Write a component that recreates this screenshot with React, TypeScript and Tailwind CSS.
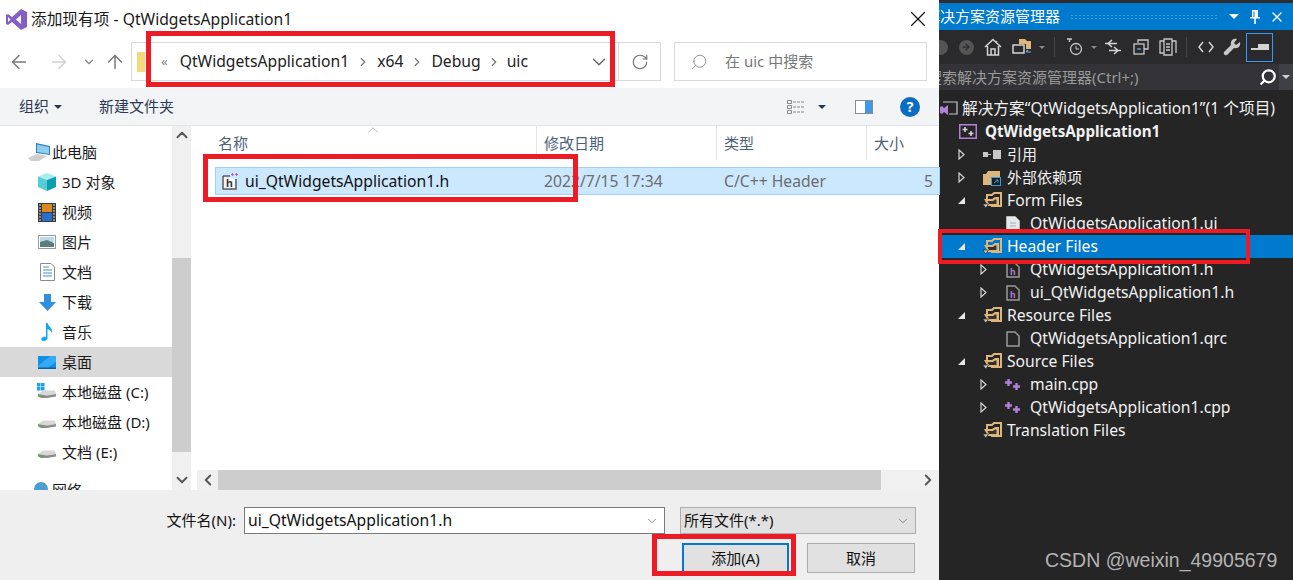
import { ArrowLeft, ArrowRight, ArrowUp, ChevronDown, ChevronLeft, ChevronRight, ChevronUp, RotateCw, Search, X } from 'lucide-react';

const FONT = '"Noto Sans", "Noto Sans CJK SC", sans-serif';

const DriveIcon = ({ win }: { win?: boolean }) => (
  <svg width="20" height="18" viewBox="0 0 20 18">
    {win && (
      <g fill="#1aa3e8">
        <rect x="0" y="0" width="3.5" height="3.5" />
        <rect x="4" y="0" width="3.5" height="3.5" />
        <rect x="0" y="4" width="3.5" height="3.5" />
        <rect x="4" y="4" width="3.5" height="3.5" />
      </g>
    )}
    <path d="M1 11 L6 7.5 H18 L19 11 L10 12.5 Z" fill="#d8d8d8" />
    <path d="M1 11 L10 12.5 L19 11 V13.5 L10 15 H4 L1 13.5 Z" fill="#8c8c8c" />
    <rect x="3" y="12.5" width="3" height="1" fill="#3fbf4a" />
  </svg>
);

const NavIcon = ({ name }: { name: string }) => {
  switch (name) {
    case 'pc':
      return (
        <svg width="24" height="18" viewBox="0 0 24 18">
          <path d="M8 0 L22 3 V12 L8 10 Z" fill="#2f7fc0" />
          <path d="M9 1.5 L21 4 V11 L9 9 Z" fill="#8fcdf0" />
          <path d="M0 15 L9 11 L19 13 L11 18 H3 Z" fill="#cfcfcf" />
        </svg>
      );
    case 'cube':
      return (
        <svg width="18" height="18" viewBox="0 0 18 18">
          <path d="M9 0 L18 3.5 L9 7 L0 3.5 Z" fill="#a9ecef" />
          <path d="M0 3.5 L9 7 V18 L0 14 Z" fill="#55cdd6" />
          <path d="M18 3.5 L9 7 V18 L18 14 Z" fill="#0d9fb0" />
        </svg>
      );
    case 'video':
      return (
        <svg width="18" height="19" viewBox="0 0 18 19">
          <rect width="18" height="19" fill="#3a3a3a" />
          <rect x="4" y="1" width="10" height="8" fill="#d88a1e" />
          <rect x="4" y="10" width="10" height="8" fill="#2a6fd0" />
          <path d="M1 2h2M1 5h2M1 8h2M1 11h2M1 14h2M1 17h2M15 2h2M15 5h2M15 8h2M15 11h2M15 14h2M15 17h2" stroke="#ddd" />
        </svg>
      );
    case 'image':
      return (
        <svg width="18" height="14" viewBox="0 0 18 14">
          <rect x="0.5" y="0.5" width="17" height="13" fill="#fff" stroke="#9a9a9a" />
          <rect x="2" y="2" width="14" height="5" fill="#bcd8ea" />
          <path d="M2 7 L9 5 L16 8 V12 H2 Z" fill="#5b7f78" />
        </svg>
      );
    case 'doc':
      return (
        <svg width="15" height="18" viewBox="0 0 15 18">
          <path d="M0.5 0.5 H11 L14.5 4 V17.5 H0.5 Z" fill="#fff" stroke="#8c8c8c" />
          <path d="M3 4h6M3 7h9M3 10h9M3 13h9" stroke="#4a8fc7" />
        </svg>
      );
    case 'down':
      return (
        <svg width="17" height="17" viewBox="0 0 17 17">
          <path d="M5 0 H12 V8 H17 L8.5 17 L0 8 H5 Z" fill="#2f8fe0" />
        </svg>
      );
    case 'music':
      return (
        <svg width="12" height="18" viewBox="0 0 12 18">
          <path d="M5 0 H6.5 C7 3 12 5 11 10 C10 7.5 8 6.5 6.5 6 V15 C6.5 17 4.5 18 2.5 18 C0.5 18 0 16.5 0.5 15.5 C1 14 3.5 13.5 5 14 Z" fill="#10a5f0" />
        </svg>
      );
    case 'desktop':
      return (
        <svg width="18" height="13" viewBox="0 0 18 13">
          <rect width="18" height="13" fill="#0f8fe8" />
          <path d="M0 10 L12 0 H18 V6 L8 13 H0 Z" fill="#35a9f5" />
          <rect y="11.5" width="18" height="1.5" fill="#0a5fa8" />
        </svg>
      );
    case 'net':
      return (
        <svg width="20" height="18" viewBox="0 0 20 18">
          <circle cx="11" cy="8" r="7" fill="#4c9fd0" />
          <path d="M0 12 L8 9 V14 Z" fill="#9a9a9a" />
        </svg>
      );
    case 'win':
      return <DriveIcon win />;
    default:
      return <DriveIcon />;
  }
};

const navItems = [
  { icon: 'cube', label: '3D 对象' },
  { icon: 'video', label: '视频' },
  { icon: 'image', label: '图片' },
  { icon: 'doc', label: '文档' },
  { icon: 'down', label: '下载' },
  { icon: 'music', label: '音乐' },
  { icon: 'desktop', label: '桌面', active: true },
  { icon: 'win', label: '本地磁盘 (C:)' },
  { icon: 'drive', label: '本地磁盘 (D:)' },
  { icon: 'drive', label: '文档 (E:)' },
];

const HeaderFileIcon = () => (
  <svg width="17" height="18" viewBox="0 0 17 18">
    <path d="M1 4 V17 H14 V7 M1 4 H8" fill="#f4f4f4" stroke="#5a5a5a" strokeWidth="1.5" />
    <text x="4" y="15" fontSize="11" fontWeight="700" fill="#333" fontFamily="Liberation Sans">h</text>
    <path d="M9 2.5h3M10.5 1v3M13 2.5h3M14.5 1v3" stroke="#b46ac0" strokeWidth="1.2" />
  </svg>
);

const FolderIcon = () => (
  <svg width="19" height="17" viewBox="0 0 19 17">
    <path d="M4 7 V3 H9 L11 1 H18 V14 H8" fill="none" stroke="#dcb67a" strokeWidth="2" />
    <path d="M1 7 H9 L12 5 H16 V14 H5 Z" fill="#dcb67a" />
    <path d="M4.5 9 H10 L12 7.5 H13.5 V12 H6 Z" fill="#3a3226" />
    <path d="M0 12 H5.5 L2.75 16 Z" fill="#c8c8c8" stroke="#252526" strokeWidth="0.6" />
  </svg>
);

const TreeFileIcon = ({ kind }: { kind: string }) => {
  if (kind === 'cpp') {
    return (
      <svg width="16" height="11" viewBox="0 0 16 11">
        <path d="M3.5 0 V7 M0 3.5 H7 M11.5 4 V11 M8 7.5 H15" stroke="#b180d7" strokeWidth="2.4" />
      </svg>
    );
  }
  if (kind === 'h') {
    return (
      <svg width="14" height="16" viewBox="0 0 14 16">
        <path d="M1 1 H9 L13 5 V15 H1 Z" fill="none" stroke="#9a9a9a" strokeWidth="1.5" />
        <text x="4" y="12.5" fontSize="9" fontWeight="700" fill="#b180d7" fontFamily="Liberation Sans">h</text>
      </svg>
    );
  }
  return (
    <svg width="14" height="16" viewBox="0 0 14 16">
      <path d="M1 1 H9 L13 5 V15 H1 Z" fill={kind === 'ui' ? '#e8e8e8' : 'none'} stroke={kind === 'ui' ? '#e8e8e8' : '#9a9a9a'} strokeWidth="1.5" />
      {kind === 'ui' && <path d="M4 7h6M4 10h6" stroke="#8fb4cc" />}
    </svg>
  );
};

const Expander = ({ state }: { state?: 'open' | 'closed' }) => {
  if (state === 'open') {
    return (
      <svg width="9" height="9" viewBox="0 0 9 9">
        <path d="M8 1 V8 H1 Z" fill="#e8e8e8" />
      </svg>
    );
  }
  if (state === 'closed') {
    return (
      <svg width="7" height="11" viewBox="0 0 7 11">
        <path d="M1 1 L6 5.5 L1 10 Z" fill="none" stroke="#d4d4d4" strokeWidth="1.2" />
      </svg>
    );
  }
  return null;
};

type TreeRow = {
  label: string;
  level: 1 | 2;
  expander?: 'open' | 'closed';
  icon: string;
  selected?: boolean;
  cjk?: boolean;
};

const treeRows: TreeRow[] = [
  { label: '引用', level: 1, expander: 'closed', icon: 'ref', cjk: true },
  { label: '外部依赖项', level: 1, expander: 'closed', icon: 'ext', cjk: true },
  { label: 'Form Files', level: 1, expander: 'open', icon: 'folder' },
  { label: 'QtWidgetsApplication1.ui', level: 2, icon: 'ui' },
  { label: 'Header Files', level: 1, expander: 'open', icon: 'folder', selected: true },
  { label: 'QtWidgetsApplication1.h', level: 2, expander: 'closed', icon: 'h' },
  { label: 'ui_QtWidgetsApplication1.h', level: 2, expander: 'closed', icon: 'h' },
  { label: 'Resource Files', level: 1, expander: 'open', icon: 'folder' },
  { label: 'QtWidgetsApplication1.qrc', level: 2, icon: 'file' },
  { label: 'Source Files', level: 1, expander: 'open', icon: 'folder' },
  { label: 'main.cpp', level: 2, expander: 'closed', icon: 'cpp' },
  { label: 'QtWidgetsApplication1.cpp', level: 2, expander: 'closed', icon: 'cpp' },
  { label: 'Translation Files', level: 1, icon: 'folder' },
];

const TreeIcon = ({ icon }: { icon: string }) => {
  if (icon === 'ref') {
    return (
      <svg width="18" height="9" viewBox="0 0 18 9">
        <rect x="0" y="2" width="5" height="5" fill="#c8c8c8" />
        <rect x="5" y="4" width="3" height="1" fill="#c8c8c8" />
        <rect x="10" y="0" width="8" height="9" fill="#c8c8c8" />
      </svg>
    );
  }
  if (icon === 'ext') {
    return (
      <svg width="18" height="16" viewBox="0 0 18 16">
        <path d="M0 4 H3 L5 1 H17 V8 H8 V15 H0 Z" fill="#dcb67a" />
        <rect x="8.5" y="7.5" width="9" height="8" fill="#1e1e1e" stroke="#3a9de0" />
        <path d="M11 13 L15 10 M12.5 10 H15 V12.5" stroke="#3a9de0" fill="none" />
      </svg>
    );
  }
  if (icon === 'folder') return <FolderIcon />;
  return <TreeFileIcon kind={icon} />;
};

const ToolBtn = ({ children, className = '' }: { children: React.ReactNode; className?: string }) => (
  <div className={`flex items-center justify-center ${className}`}>{children}</div>
);

const App = () => {
  return (
    <div className="relative flex w-[1293px] h-[580px] overflow-hidden" style={{ fontFamily: FONT }}>
      {/* add-existing-item dialog */}
      <div className="w-[939px] shrink-0 flex flex-col bg-white text-[15.7px] text-[#1a1a1a]">
        <div className="h-[38px] shrink-0 flex items-center pl-[6px] pr-[8px]">
          <svg width="21" height="21" viewBox="0 0 21 21">
            <path d="M15 0 L21 3 V18 L15 21 L6 13 L2 16 L0 15 V6 L2 5 L6 8 Z M15 6 L10 10.5 L15 15 Z M2 8 V13 L4.5 10.5 Z" fill="#865fc5" fillRule="evenodd" />
          </svg>
          <span className="ml-[4px] mt-[2px]">添加现有项 - QtWidgetsApplication1</span>
          <X className="ml-auto" size={26} strokeWidth={1.1} color="#111" />
        </div>

        <div className="h-[50px] shrink-0 flex items-start pt-[4px]">
          <div className="w-[131px] h-[39px] shrink-0 flex items-center pl-[8px]">
            <ArrowLeft size={22} strokeWidth={1.6} color="#777" />
            <ArrowRight size={22} strokeWidth={1.6} color="#d0d0d0" className="ml-[18px]" />
            <ChevronDown size={14} strokeWidth={2} color="#888" className="ml-[12px]" />
            <ArrowUp size={22} strokeWidth={1.6} color="#777" className="ml-[8px]" />
          </div>
          <div className="w-[488px] h-[39px] shrink-0 flex items-center border border-[#d9d9d9] pl-[5px] pr-[8px] text-[#222]">
            <svg width="8" height="20" viewBox="0 0 8 20" className="mr-[16px]">
              <rect width="8" height="20" fill="#f5d77c" />
            </svg>
            <span className="text-[#808080] text-[13px] mr-[12px]">«</span>
            <span>QtWidgetsApplication1</span>
            <ChevronRight size={14} color="#777" className="mx-[7px]" />
            <span>x64</span>
            <ChevronRight size={14} color="#777" className="mx-[7px]" />
            <span>Debug</span>
            <ChevronRight size={14} color="#777" className="mx-[6px]" />
            <span>uic</span>
            <ChevronDown size={22} strokeWidth={1.5} color="#666" className="ml-auto" />
          </div>
          <div className="w-[42px] h-[39px] shrink-0 flex items-center justify-center border border-l-0 border-[#d9d9d9]">
            <RotateCw size={18} strokeWidth={1.6} color="#777" />
          </div>
          <div className="w-[253px] h-[39px] shrink-0 ml-[13px] flex items-center border border-[#d9d9d9] pl-[15px] text-[#777] text-[15px]">
            <Search size={18} color="#888" className="-scale-x-100" strokeWidth={1.2} />
            <span className="ml-[17px]">在 uic 中搜索</span>
          </div>
        </div>

        <div className="h-[38px] shrink-0 flex items-center bg-[#f3f4f6] border-b border-[#e6e6e6] pl-[19px] pr-[19px] text-[#2b3a55] text-[15px]">
          <span>组织</span>
          <span className="ml-[5px] w-0 h-0 border-x-[4px] border-x-transparent border-t-[4px] border-t-[#26364f]" />
          <span className="ml-[37px]">新建文件夹</span>
          <svg width="18" height="16" viewBox="0 0 18 16" className="ml-auto">
            <path d="M0.5 1.5h4v3h-4zM0.5 6.5h4v3h-4zM0.5 11.5h4v3h-4z" fill="none" stroke="#888" />
            <path d="M6 3h12M6 8h12M6 13h12" stroke="#888" strokeDasharray="3 1" />
          </svg>
          <span className="ml-[13px] w-0 h-0 border-x-[4px] border-x-transparent border-t-[4px] border-t-[#26364f]" />
          <div className="ml-[29px] w-[18px] h-[14px] border border-[#8b8b8b] flex justify-end bg-white">
            <div className="w-[7px] bg-[#3f97e8]" />
          </div>
          <div className="ml-[27px] w-[20px] h-[20px] rounded-full bg-[#0b6cc4] flex items-center justify-center text-white text-[14px] font-bold leading-none">?</div>
        </div>

        <div className="flex-1 min-h-0 flex">
          {/* nav pane */}
          <div className="w-[172px] shrink-0 pt-[11px] overflow-hidden text-[#1a1a1a] text-[15px]">
            <div className="h-[30px] flex items-center pl-[28px]">
              <div className="w-[24px] flex justify-center"><NavIcon name="pc" /></div>
              <span>此电脑</span>
            </div>
            {navItems.map((item) => (
              <div key={item.label} className={`h-[30px] flex items-center pl-[37px] ${item.active ? 'bg-[#d9d9d9]' : ''}`}>
                <div className="w-[20px] flex justify-center"><NavIcon name={item.icon} /></div>
                <span className="ml-[5px] whitespace-nowrap">{item.label}</span>
              </div>
            ))}
            <div className="h-[30px] flex items-center pl-[28px] mt-[8px]">
              <div className="w-[24px] flex justify-center"><NavIcon name="net" /></div>
              <span>网络</span>
            </div>
          </div>
          <div className="w-[19px] shrink-0 flex flex-col bg-[#f0f0f0]">
            <div className="h-[17px] flex items-center justify-center">
              <ChevronUp size={18} strokeWidth={2.5} color="#555" />
            </div>
            <div className="h-[115px]" />
            <div className="h-[194px] bg-[#cdcdcd]" />
            <div className="flex-1" />
            <div className="h-[20px] flex items-center justify-center">
              <ChevronDown size={18} strokeWidth={2.5} color="#555" />
            </div>
          </div>

          {/* file list */}
          <div className="flex-1 min-w-0 flex flex-col pl-[6px] relative">
            <div className="flex h-[34px] text-[#4c607a] text-[15px] shrink-0 -ml-[6px]">
              <div className="w-[346px] pl-[27px] pt-[6px] border-r border-[#e5e5e5]">名称</div>
              <div className="w-[180px] pl-[7px] pt-[6px] border-r border-[#e5e5e5]">修改日期</div>
              <div className="w-[150px] pl-[7px] pt-[6px] border-r border-[#e5e5e5]">类型</div>
              <div className="flex-1 pl-[7px] pt-[6px]">大小</div>
            </div>
            <ChevronUp size={18} strokeWidth={0.8} color="#888" className="absolute left-[173px] top-[-5px]" />
            <div className="flex-1 min-h-0 pt-[7px] pl-[18px]">
              <div className="h-[28px] flex items-center bg-[#cce8ff] border border-[#99d1ff] -mr-[1px] text-[#6d6d6d]">
                <div className="w-[29px] pl-[6px] shrink-0"><HeaderFileIcon /></div>
                <span className="w-[299px] mt-[2px] text-[#111] whitespace-nowrap">ui_QtWidgetsApplication1.h</span>
                <span className="w-[180px] mt-[2px] whitespace-nowrap">2022/7/15 17:34</span>
                <span className="w-[200px] mt-[2px] whitespace-nowrap">C/C++ Header</span>
                <span className="mt-[2px]">5</span>
              </div>
            </div>
            <div className="h-[20px] shrink-0 flex bg-[#f0f0f0]">
              <div className="w-[21px] flex items-center justify-center"><ChevronLeft size={18} strokeWidth={2.5} color="#555" /></div>
              <div className="w-[663px] bg-[#cdcdcd]" />
              <div className="flex-1 flex items-center justify-end pr-[2px]"><ChevronRight size={18} strokeWidth={2.5} color="#555" /></div>
            </div>
          </div>
        </div>

        <div className="h-[90px] shrink-0 bg-[#efefef] text-[#111] text-[15px] flex flex-col items-end pr-[23px] pt-[17px]">
          <div className="flex items-center h-[27px]">
            <span>文件名(N):</span>
            <div className="ml-[8px] w-[421px] h-[27px] bg-white border border-[#7a7a7a] flex items-center justify-between pl-[3px] pr-[5px] text-[15.7px]">
              <span>ui_QtWidgetsApplication1.h</span>
              <ChevronDown size={14} strokeWidth={1.5} color="#777" />
            </div>
            <div className="ml-[15px] w-[236px] h-[27px] bg-[#e1e1e1] border border-[#adadad] flex items-center justify-between pl-[3px] pr-[5px]">
              <span>所有文件(*.*)</span>
              <ChevronDown size={14} strokeWidth={1.5} color="#777" />
            </div>
          </div>
          <div className="flex mt-[9px] mr-[1px]">
            <button className="w-[107px] h-[30px] bg-[#e1e1e1] border-2 border-[#0078d7] text-[15px]">添加(A)</button>
            <button className="ml-[18px] w-[108px] h-[30px] bg-[#e1e1e1] border border-[#adadad] text-[15px]">取消</button>
          </div>
        </div>
      </div>

      {/* solution explorer */}
      <div className="flex-1 min-w-0 overflow-hidden flex flex-col bg-[#252526] text-[#f1f1f1] text-[15.7px]">
        <div className="h-[3px] shrink-0 bg-[#2d2d30]" />
        <div className="h-[27px] shrink-0 flex items-center bg-[#007acc] pr-[8px] text-white text-[15px] whitespace-nowrap">
          <span className="-ml-[14px]">解决方案资源管理器</span>
          <div className="flex-1 mx-[10px] h-[6px] bg-[radial-gradient(#3f9bd8_1px,transparent_1px)] bg-[length:4px_3px]" />
          <span className="w-0 h-0 border-x-[5px] border-x-transparent border-t-[5px] border-t-white" />
          <svg width="10" height="14" viewBox="0 0 10 14" className="ml-[11px]">
            <path d="M2 0 H8 V7 H10 V8.5 H5.8 V14 H4.2 V8.5 H0 V7 H2 Z M3.5 1.5 V7 H4.5 V1.5 Z" fill="#fff" fillRule="evenodd" />
          </svg>
          <X size={16} strokeWidth={2} color="#fff" className="ml-[9px]" />
        </div>
        <div className="h-[34px] shrink-0 flex items-center bg-[#2a2a2c]">
          <ToolBtn className="w-[16px] -ml-[7px] h-[14px] mr-[10px]">
            <div className="w-[15px] h-[15px] rounded-full bg-[#555]" />
          </ToolBtn>
          <ToolBtn className="w-[16px] mr-[10px]">
            <div className="w-[15px] h-[15px] rounded-full bg-[#555] flex items-center justify-center">
              <ArrowRight size={10} strokeWidth={3} color="#2d2d30" />
            </div>
          </ToolBtn>
          <ToolBtn className="w-[18px]">
            <svg width="18" height="18" viewBox="0 0 18 18">
              <path d="M1 9 L9 1.5 L17 9 M3.5 8 V17 H14.5 V8 M7 17 V11 H11 V17 M12.5 3 V5.5" fill="none" stroke="#d4d4d4" strokeWidth="1.5" />
            </svg>
          </ToolBtn>
          <ToolBtn className="w-[22px] ml-[9px]">
            <svg width="20" height="18" viewBox="0 0 20 18">
              <path d="M1 7 H12 V15 H1 Z" fill="none" stroke="#d4d4d4" strokeWidth="1.5" />
              <path d="M7 1 H13 L15 3 H19 V11 H14 V6 H7 Z" fill="#dcb67a" />
              <path d="M14 14 H19 M14 14 L16 12" stroke="#6aa9e0" strokeWidth="1.2" />
            </svg>
          </ToolBtn>
          <span className="ml-[6px] w-0 h-0 border-x-[3px] border-x-transparent border-t-[3px] border-t-[#888]" />
          <div className="ml-[9px] w-px h-[20px] bg-[#444]" />
          <ToolBtn className="w-[20px] ml-[11px]">
            <svg width="20" height="18" viewBox="0 0 20 18">
              <circle cx="10" cy="11" r="5.5" fill="none" stroke="#c8c8c8" strokeWidth="1.3" />
              <path d="M10 8 V11 H13" fill="none" stroke="#c8c8c8" />
              <path d="M1 1 H6 M3.5 1 V4" stroke="#c8c8c8" strokeWidth="1.3" />
            </svg>
          </ToolBtn>
          <span className="ml-[5px] w-0 h-0 border-x-[3px] border-x-transparent border-t-[3px] border-t-[#888]" />
          <ToolBtn className="w-[16px] ml-[8px]">
            <svg width="16" height="16" viewBox="0 0 16 16">
              <path d="M0 4.5 H12 M7 1 L3 4.5 L7 8 M16 11.5 H4 M9 8 L13 11.5 L9 15" fill="none" stroke="#d4d4d4" strokeWidth="1.5" />
            </svg>
          </ToolBtn>
          <ToolBtn className="w-[16px] ml-[12px]">
            <svg width="16" height="16" viewBox="0 0 16 16">
              <path d="M5 4 V1 H15 V10 H11" fill="none" stroke="#c8c8c8" strokeWidth="1.3" />
              <rect x="1" y="5" width="10" height="10" fill="none" stroke="#c8c8c8" strokeWidth="1.3" />
              <path d="M4 10 H8" stroke="#6aa9e0" strokeWidth="1.3" />
            </svg>
          </ToolBtn>
          <ToolBtn className="w-[18px] ml-[10px]">
            <svg width="18" height="18" viewBox="0 0 18 18">
              <path d="M5 15 H1 V3 H5 M13 3 H17 V15" fill="none" stroke="#c8c8c8" strokeWidth="1.3" />
              <path d="M5 1 H13 V17 H5 Z M7 6 H11 M7 9 H11 M7 12 H11" fill="none" stroke="#c8c8c8" strokeWidth="1.3" />
            </svg>
          </ToolBtn>
          <div className="ml-[9px] w-px h-[20px] bg-[#444]" />
          <ToolBtn className="w-[16px] ml-[11px]">
            <svg width="16" height="12" viewBox="0 0 16 12">
              <path d="M5 1 L1 6 L5 11 M11 1 L15 6 L11 11" fill="none" stroke="#d4d4d4" strokeWidth="1.5" />
            </svg>
          </ToolBtn>
          <ToolBtn className="w-[18px] ml-[9px]">
            <svg width="18" height="18" viewBox="0 0 18 18">
              <path d="M17 4 L13 7 L11 5 L14 1 C10 0 7 3 8 7 L1 14 C0 16 2 18 4 17 L11 10 C15 11 18 8 17 4 Z" fill="#c8c8c8" />
            </svg>
          </ToolBtn>
          <div className="ml-[5px] w-[27px] h-[29px] border border-[#3399ff] flex items-center justify-center">
            <svg width="18" height="8" viewBox="0 0 18 8">
              <rect x="0" y="5" width="18" height="2" fill="#d4d4d4" />
              <rect x="7" y="1" width="11" height="4" fill="#d4d4d4" />
            </svg>
          </div>
        </div>
        <div className="h-[26px] shrink-0 flex items-center bg-[#333337] text-[#9a9a9a] text-[15px] whitespace-nowrap">
          <span className="-ml-[12px]">搜索解决方案资源管理器(Ctrl+;)</span>
          <Search size={18} strokeWidth={3} color="#fff" className="ml-auto -scale-x-100 mr-[2px]" />
          <div className="w-[14px] h-full flex items-center justify-center bg-[#3f3f46]">
            <span className="w-0 h-0 border-x-[4px] border-x-transparent border-t-[4px] border-t-[#d0d0d0]" />
          </div>
        </div>

        <div className="flex-1 min-h-0 pt-[7px] whitespace-nowrap">
          <div className="h-[23px] flex items-center pl-[1px]">
            <svg width="18" height="16" viewBox="0 0 18 16">
              <path d="M3 1 H17 V13 H9" fill="none" stroke="#c8c8c8" strokeWidth="1.2" />
              <path d="M0 6 L2 5 L4 7 L8 4 V14 L4 11 L2 13 L0 12 Z" fill="#b180d7" />
            </svg>
            <span className="ml-[4px]">解决方案“QtWidgetsApplication1”(1 个项目)</span>
          </div>
          <div className="h-[23px] flex items-center font-bold text-[15.2px]">
            <div className="w-[21px] h-[16px] ml-[20px] shrink-0 flex items-center">
              <svg width="18" height="15" viewBox="0 0 18 15">
                <rect x="0.75" y="0.75" width="16.5" height="13.5" fill="none" stroke="#b180d7" strokeWidth="1.5" />
                <path d="M6 3 V8 M3.5 5.5 H8.5 M12 7 V12 M9.5 9.5 H14.5" stroke="#d4d4d4" strokeWidth="1.6" />
              </svg>
            </div>
            <span className="ml-[5px]">QtWidgetsApplication1</span>
          </div>
          {treeRows.map((row) => (
            <div key={row.label} className={`h-[23px] flex items-center ${row.selected ? 'bg-[#007acc] text-white' : ''} ${row.level === 1 ? 'pl-[18px]' : 'pl-[40px]'}`}>
              <div className="w-[9px] shrink-0 flex items-center justify-center">
                <Expander state={row.expander} />
              </div>
              <div className={`shrink-0 flex items-center justify-center ${row.level === 1 ? 'w-[24px] ml-[14px]' : 'w-[18px] ml-[16px]'}`}>
                <TreeIcon icon={row.icon} />
              </div>
              <span className={`${row.level === 1 ? 'ml-[3px]' : 'ml-[8px]'} ${row.cjk ? 'text-[15px]' : ''}`}>{row.label}</span>
            </div>
          ))}
        </div>
      </div>

      {/* red annotation frames */}
      <div className="absolute left-[146px] top-[31px] w-[469px] h-[56px] border-[5px] border-[#ed1c24]" />
      <div className="absolute left-[203px] top-[154px] w-[375px] h-[48px] border-[5px] border-[#ed1c24]" />
      <div className="absolute left-[938px] top-[229px] w-[312px] h-[35px] border-[4px] border-[#ed1c24]" />
      <div className="absolute left-[652px] top-[534px] w-[144px] h-[42px] border-[5px] border-[#ed1c24]" />
      <span className="absolute left-[1045px] top-[546px] text-[19.5px] text-[#b4b4b4]" style={{ fontFamily: '"Liberation Sans", sans-serif' }}>CSDN @weixin_49905679</span>
    </div>
  );
};

export default App;
